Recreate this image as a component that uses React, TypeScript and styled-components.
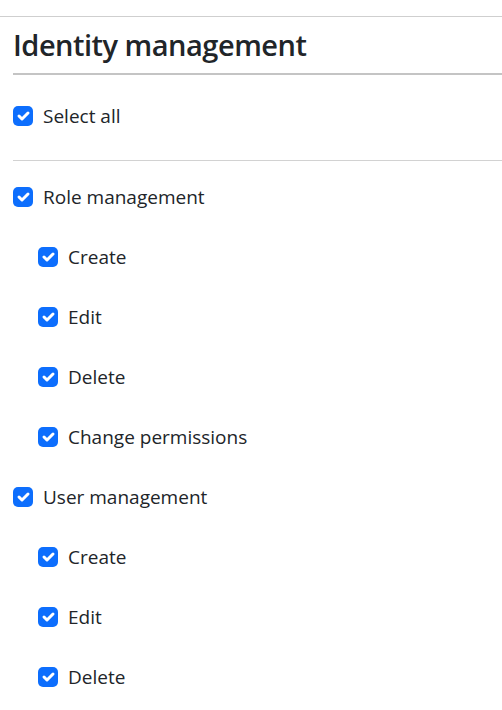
import React from "react";
import styled, { createGlobalStyle } from "styled-components";

const GlobalStyle = createGlobalStyle`
  html, body { margin: 0; padding: 0; background: #ffffff; }
  body {
    font-family: "Open Sans", "Noto Sans", "Liberation Sans", sans-serif;
    color: #212529;
    -webkit-font-smoothing: antialiased;
  }
`;

const Page = styled.div`
  padding-top: 16px;
`;

const TopRule = styled.hr`
  margin: 0;
  border: 0;
  border-top: 1px solid #cfcfcf;
`;

const Section = styled.section`
  padding-left: 13px;
`;

const Title = styled.h2`
  margin: 0;
  padding: 10px 0 10px;
  font-size: 29px;
  line-height: 36px;
  font-weight: 600;
  color: #212529;
  border-bottom: 2px solid #c4c4c4;
  letter-spacing: -0.5px;
`;

const List = styled.div`
  display: flex;
  flex-direction: column;
  padding-top: 11px;
`;

const Row = styled.label<{ $level: number }>`
  display: flex;
  align-items: center;
  gap: 10px;
  height: 60px;
  padding-left: ${(p) => p.$level * 25}px;
  font-size: 19px;
  color: #212529;
  cursor: pointer;
`;

const Divider = styled.hr`
  margin: 14px 0 6px;
  border: 0;
  border-top: 1px solid #d2d2d2;
`;

const Box = styled.span`
  display: inline-flex;
  align-items: center;
  justify-content: center;
  flex: none;
  width: 20px;
  height: 20px;
  border-radius: 5px;
  background: #0d6efd;
  svg {
    display: block;
  }
`;

const Check = () => (
  <Box>
    <svg width="20" height="20" viewBox="0 0 20 20" fill="none">
      <path
        d="m6 10 3 3 6-6"
        stroke="#fff"
        strokeWidth="3"
        strokeLinecap="round"
        strokeLinejoin="round"
      />
    </svg>
  </Box>
);

type Item = { label: string; level: number };

const groups: { title: string; items: string[] }[] = [
  { title: "Role management", items: ["Create", "Edit", "Delete", "Change permissions"] },
  { title: "User management", items: ["Create", "Edit", "Delete"] },
];

export default function App() {
  const rows: Item[] = [];
  groups.forEach((g) => {
    rows.push({ label: g.title, level: 0 });
    g.items.forEach((i) => rows.push({ label: i, level: 1 }));
  });
  return (
    <>
      <GlobalStyle />
      <Page>
        <TopRule />
        <Section>
          <Title>Identity management</Title>
          <List>
            <Row $level={0}>
              <Check />
              <span>Select all</span>
            </Row>
            <Divider />
            {rows.map((r, idx) => (
              <Row key={idx} $level={r.level}>
                <Check />
                <span>{r.label}</span>
              </Row>
            ))}
          </List>
        </Section>
      </Page>
    </>
  );
}
